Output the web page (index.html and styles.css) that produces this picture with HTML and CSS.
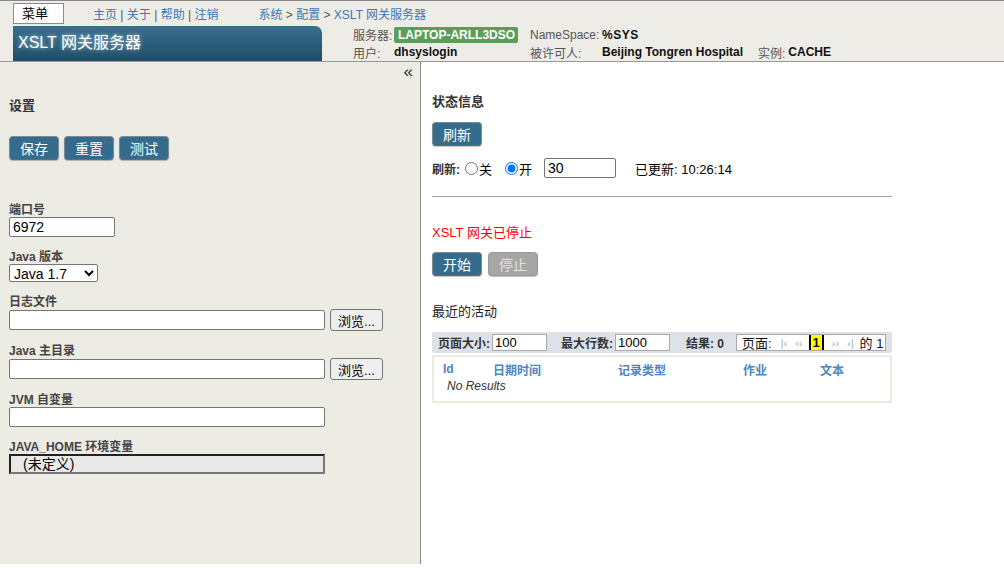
FILE: index.html
```html
<!DOCTYPE html>
<html lang="zh">
<head>
<meta charset="utf-8">
<title>XSLT 网关服务器</title>
<link rel="stylesheet" href="styles.css">
</head>
<body>
<div class="header">
  <div class="toprow">
    <span class="menubox">菜单</span>
    <span class="nav"><a>主页</a> | <a>关于</a> | <a>帮助</a> | <a>注销</a></span>
    <span class="crumb"><a>系统</a> &gt; <a>配置</a> &gt; <a>XSLT 网关服务器</a></span>
  </div>
  <div class="botrow">
    <div class="titlebar">XSLT 网关服务器</div>
    <div class="info">
      <span class="lbl">服务器:</span><span class="val"><span class="badge">LAPTOP-ARLL3DSO</span></span>
      <span class="lbl">NameSpace:</span><span class="val ns">%SYS</span><span></span>
      <span class="lbl">用户:</span><span class="val">dhsyslogin</span>
      <span class="lbl">被许可人:</span><span class="val">Beijing Tongren Hospital</span>
      <span class="inst"><span class="lbl">实例:</span><span class="val">CACHE</span></span>
    </div>
  </div>
</div>
<div class="main">
  <div class="leftpane">
    <div class="collapse">«</div>
    <div class="sectitle">设置</div>
    <div class="btnrow">
      <button class="btn">保存</button>
      <button class="btn">重置</button>
      <button class="btn">测试</button>
    </div>
    <div class="fields">
      <div class="field">
        <label class="flabel">端口号</label>
        <input class="txt short" type="text" value="6972">
      </div>
      <div class="field">
        <label class="flabel">Java 版本</label>
        <select class="sel"><option>Java 1.7</option></select>
      </div>
      <div class="field">
        <label class="flabel">日志文件</label>
        <div class="ctlrow"><input class="txt wide" type="text"><button class="browse">浏览...</button></div>
      </div>
      <div class="field">
        <label class="flabel">Java 主目录</label>
        <div class="ctlrow"><input class="txt wide" type="text"><button class="browse">浏览...</button></div>
      </div>
      <div class="field">
        <label class="flabel">JVM 自变量</label>
        <input class="txt wide" type="text">
      </div>
      <div class="field">
        <label class="flabel">JAVA_HOME 环境变量</label>
        <div class="readonly">(未定义)</div>
      </div>
    </div>
  </div>
  <div class="rightpane">
    <div class="sectitle rt">状态信息</div>
    <button class="btn">刷新</button>
    <div class="refrow">
      <span class="b">刷新:</span>
      <input type="radio" name="r" class="rad r1"><span>关</span>
      <input type="radio" name="r" class="rad r2" checked><span>开</span>
      <input class="txt sec" type="text" value="30">
      <span class="upd">已更新: 10:26:14</span>
    </div>
    <div class="hr"></div>
    <div class="stopped">XSLT 网关已停止</div>
    <div class="btnrow2">
      <button class="btn">开始</button>
      <button class="btn dis">停止</button>
    </div>
    <div class="recent">最近的活动</div>
    <div class="toolbar">
      <span class="b">页面大小:</span><input class="tin" type="text" value="100">
      <span class="b g1">最大行数:</span><input class="tin" type="text" value="1000">
      <span class="b g2">结果: 0</span>
      <span class="pager"><span>页面:</span><span class="pg pf">|‹</span><span class="pg">‹‹</span><span class="cur">1</span><span class="pg">››</span><span class="pg">›|</span><span class="of">的 1</span></span>
    </div>
    <div class="tbl">
      <div class="thead">
        <span class="c1">Id</span><span class="c2">日期时间</span><span class="c3">记录类型</span><span class="c4">作业</span><span class="c5">文本</span>
      </div>
      <div class="nores">No Results</div>
    </div>
  </div>
</div>
</body>
</html>
```

FILE: styles.css
```css
* { box-sizing: border-box; }
body {
  margin: 0;
  background: #fff;
  font-family: "Liberation Sans", Arial, "Noto Sans CJK SC", sans-serif;
  font-size: 13px;
  color: #000;
}
a { color: #3a78b6; text-decoration: none; }

.header {
  border-top: 1px solid #8a8a8a;
  border-bottom: 1px solid #999;
  background: #edece6;
  height: 62px;
  padding-top: 2px;
}
.toprow {
  display: flex;
  align-items: center;
  height: 21px;
  padding-left: 13px;
  white-space: nowrap;
}
.menubox {
  width: 51px;
  height: 21px;
  border: 1px solid #8a8a8a;
  background: #fff;
  padding-left: 8px;
  line-height: 19px;
  font-size: 13px;
}
.nav { margin-left: 29px; color: #555; font-size: 12px; }
.crumb { margin-left: 40px; color: #555; font-size: 12px; }

.botrow {
  display: flex;
  margin-top: 2px;
  height: 35px;
}
.titlebar {
  margin-left: 13px;
  width: 309px;
  height: 35px;
  background: linear-gradient(#37708f, #1f4d68);
  border-top-right-radius: 7px;
  color: #fff;
  font-size: 16px;
  line-height: 34px;
  padding-left: 5px;
  text-shadow: 0 0 4px rgba(255,255,255,0.7);
}
.info {
  margin-left: 31px;
  display: grid;
  grid-template-columns: 41px 136px 72px 156px auto;
  grid-template-rows: 17px 18px;
  align-items: center;
  font-size: 12px;
  white-space: nowrap;
}
.lbl { color: #555; }
.val { font-weight: bold; color: #111; }
.ns { letter-spacing: 0.5px; }
.badge {
  display: inline-block;
  background: #5b9e5b;
  color: #fff;
  border-radius: 2px;
  height: 16px;
  line-height: 16px;
  padding: 0 3px 0 4px;
}
.inst { display: flex; align-items: center; gap: 3px; }

.main { display: flex; }
.leftpane {
  width: 421px;
  height: 502px;
  background: #ecebe4;
  border-right: 1px solid #888;
  padding-left: 9px;
}
.collapse {
  text-align: right;
  padding-right: 7px;
  font-size: 17px;
  line-height: 20px;
  height: 20px;
  color: #233;
}
.sectitle {
  font-weight: bold;
  font-size: 13px;
  line-height: 16px;
  color: #333;
  margin-top: 16px;
}
.btnrow { display: flex; gap: 5px; margin-top: 22px; }
.btn {
  height: 24px;
  width: 50px;
  background: #356b8c;
  color: #fff;
  font-family: inherit;
  font-size: 14px;
  border: 1px solid #7e8a94;
  border-bottom-color: #6a6a6a;
  border-radius: 4px;
  box-shadow: 0 1px 1px rgba(0,0,0,0.25);
  padding: 0;
}
.btn.dis { background: #a6a6a6; color: #e4e4e4; border-color: #999; }

.fields { margin-top: 43px; }
.field { margin-bottom: 13px; }
.flabel {
  display: block;
  font-weight: bold;
  font-size: 12px;
  line-height: 14px;
  color: #444;
}
.txt {
  height: 20px;
  border: 1px solid #767676;
  border-radius: 2px;
  background: #fff;
  font-family: inherit;
  font-size: 14px;
  padding: 0 3px;
  display: block;
}
.short { width: 106px; }
.wide { width: 316px; }
.sel {
  display: block;
  width: 89px;
  height: 18px;
  font-family: inherit;
  font-size: 14px;
  border: 1px solid #767676;
  border-radius: 2px;
  background: #fff;
}
.ctlrow { display: flex; align-items: center; gap: 5px; height: 22px; }
.browse {
  width: 53px;
  height: 22px;
  background: #efefef;
  border: 1px solid #767676;
  border-radius: 3px;
  font-family: inherit;
  font-size: 13px;
  padding: 0;
}
.readonly {
  width: 316px;
  height: 20px;
  background: #e9e9e9;
  border: 2px solid #777;
  border-top-color: #222;
  border-left-color: #222;
  font-size: 14px;
  line-height: 16px;
  padding-left: 12px;
}

.rightpane { flex: 1; padding-left: 11px; }
.sectitle.rt { margin-top: 32px; margin-bottom: 12px; }
.refrow {
  display: flex;
  align-items: center;
  height: 20px;
  margin-top: 12px;
  font-size: 13px;
}
.b { font-weight: bold; color: #333; font-size: 12px; }
.rad { margin: 0 1px 0 0; width: 13px; height: 13px; }
.r1 { margin-left: 5px; }
.r2 { margin-left: 13px; }
.txt.sec { width: 72px; margin-left: 12px; }
.upd { margin-left: 19px; }
.hr { width: 460px; height: 1px; background: #a0a0a0; margin-top: 18px; }
.stopped { color: #f00; margin-top: 28px; line-height: 16px; }
.btnrow2 { display: flex; gap: 6px; margin-top: 11px; }
.recent { margin-top: 28px; line-height: 16px; color: #222; }
.toolbar {
  width: 460px;
  height: 21px;
  margin-top: 12px;
  background: #dde2e9;
  border-radius: 2px;
  display: flex;
  align-items: center;
  padding-left: 6px;
  font-size: 12px;
}
.tin {
  width: 55px;
  height: 17px;
  border: 1px solid #a8a8a8;
  font-family: inherit;
  font-size: 13px;
  padding: 0 2px;
  margin-left: 2px;
}
.g1 { margin-left: 14px; }
.g2 { margin-left: 16px; }
.pager {
  margin-left: 12px;
  width: 150px;
  height: 17px;
  border: 1px solid #a8a8a8;
  background: #fff;
  display: flex;
  align-items: center;
  padding-left: 5px;
  font-size: 13px;
  color: #111;
}
.pg { color: #aaa; font-size: 11px; margin-left: 8px; }
.pf { margin-left: 9px; }
.cur {
  background: #ff0;
  border-left: 2px solid #000;
  border-right: 2px solid #000;
  font-weight: bold;
  padding: 0 2px;
  height: 15px;
  line-height: 15px;
  margin-left: 6px;
}
.of { margin-left: 6px; }
.tbl {
  width: 460px;
  height: 48px;
  margin-top: 2px;
  border: 2px solid #ecebe0;
  background: #fff;
}
.thead {
  display: flex;
  height: 22px;
  align-items: center;
  padding-top: 2px;
  font-size: 12px;
  font-weight: bold;
  color: #4b86c3;
}
.c1 { margin-left: 9px; width: 50px; }
.c2 { width: 125px; }
.c3 { width: 125px; }
.c4 { width: 77px; }
.nores { font-style: italic; font-size: 12px; padding-left: 13px; color: #333; line-height: 14px; }
```
